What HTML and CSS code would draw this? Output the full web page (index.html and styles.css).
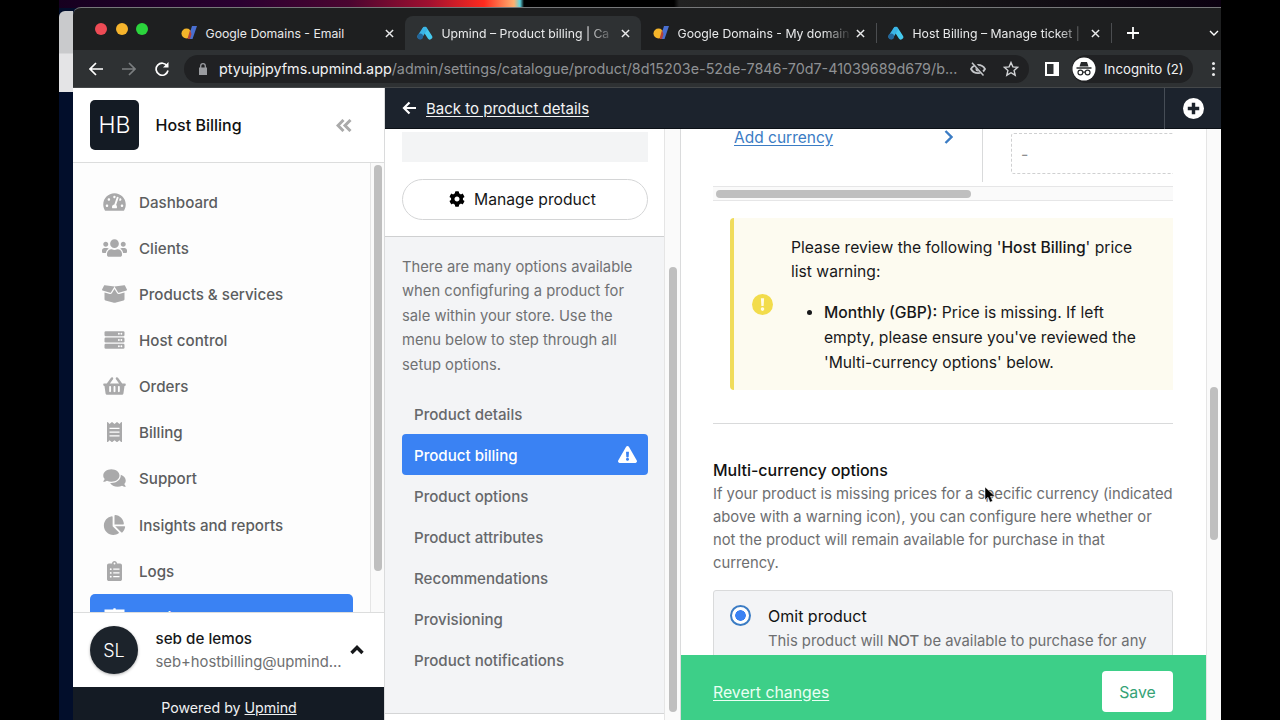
FILE: index.html
```html
<!DOCTYPE html>
<html lang="en">
<head>
  <meta charset="UTF-8" />
  <meta name="viewport" content="width=device-width, initial-scale=1.0"/>
  <title>Upmind – Product billing</title>
  <link rel="stylesheet" href="styles.css">
</head>
<body>
  <div class="desktop">
    <div class="back-window"></div>

    <div class="browser">
      <div class="tabs">
        <div class="lights"><i class="red"></i><i class="yellow"></i><i class="green"></i></div>
        <div class="tab">
          <svg class="fav" viewBox="0 0 16 16"><circle cx="5.5" cy="8.5" r="5" fill="#f5b52a"/><path d="M11 1h5l-4.500 13H7z" fill="#4a6fd0"/><path d="M9 5l1.500 4-1.500 5H6.500z" fill="#b5443c"/></svg>
          <span class="tab-title">Google Domains - Email</span>
          <svg class="close" viewBox="0 0 10 10"><path d="M1 1l8 8M9 1l-8 8"/></svg>
        </div>
        <div class="tab active">
          <svg class="fav" viewBox="0 0 16 16"><path d="M8 4.500l4.800 7.500" fill="none" stroke="#45c9ee" stroke-width="5" stroke-linecap="round"/><path d="M7.500 4.500L3 11.500" fill="none" stroke="#3ab4e6" stroke-width="5" stroke-linecap="round"/><circle cx="3.200" cy="11.500" r="2.900" fill="#23669a"/></svg>
          <span class="tab-title fade">Upmind – Product billing | Ca</span>
          <svg class="close" viewBox="0 0 10 10"><path d="M1 1l8 8M9 1l-8 8"/></svg>
        </div>
        <div class="tab third">
          <svg class="fav" viewBox="0 0 16 16"><circle cx="5.500" cy="8.500" r="5" fill="#f5b52a"/><path d="M11 1h5l-4.500 13H7z" fill="#4a6fd0"/><path d="M9 5l1.500 4-1.500 5H6.500z" fill="#b5443c"/></svg>
          <span class="tab-title fade">Google Domains - My domain</span>
          <svg class="close" viewBox="0 0 10 10"><path d="M1 1l8 8M9 1l-8 8"/></svg>
        </div>
        <div class="tab ruled">
          <svg class="fav" viewBox="0 0 16 16"><path d="M8 4.500l4.800 7.500" fill="none" stroke="#45c9ee" stroke-width="5" stroke-linecap="round"/><path d="M7.500 4.500L3 11.500" fill="none" stroke="#3ab4e6" stroke-width="5" stroke-linecap="round"/><circle cx="3.200" cy="11.500" r="2.900" fill="#23669a"/></svg>
          <span class="tab-title fade">Host Billing – Manage ticket |</span>
          <svg class="close" viewBox="0 0 10 10"><path d="M1 1l8 8M9 1l-8 8"/></svg>
        </div>
        <div class="tab-tools">
          <svg class="plus" viewBox="0 0 12 12"><path d="M6 0v12M0 6h12"/></svg>
          <svg class="more-tabs" viewBox="0 0 10 6"><path d="M1 1l4 4 4-4"/></svg>
        </div>
      </div>

      <div class="toolbar">
        <svg class="nav-btn" viewBox="0 0 14 14"><path d="M14 7H1M7 1L1 7l6 6"/></svg>
        <svg class="nav-btn dim" viewBox="0 0 14 14"><path d="M0 7h13M7 1l6 6-6 6"/></svg>
        <svg class="nav-btn" viewBox="0 0 14 14"><path d="M12.200 4A6 6 0 1 0 13 8.500"/><path d="M13.500 0v5.500H8z" fill="#fff" stroke="none"/></svg>
        <div class="omnibox">
          <svg class="lock" viewBox="0 0 10 12"><path d="M1 4.500h8V12H1z" fill="#9a9ca0"/><path d="M2.700 5V3a2.300 2.300 0 0 1 4.600 0v2" fill="none" stroke="#9a9ca0" stroke-width="1.300"/></svg>
          <span class="url"><b>ptyujpjpyfms.upmind.app</b>/admin/settings/catalogue/product/8d15203e-52de-7846-70d7-41039689d679/b...</span>
          <svg class="eye" viewBox="0 0 16 14"><path d="M1 7c3-5.500 11-5.500 14 0-3 5.500-11 5.500-14 0z" fill="none" stroke="#c4c6c9" stroke-width="1.800"/><circle cx="8" cy="7" r="2.500" fill="#c4c6c9"/><path d="M3 0l11 13" stroke="#202123" stroke-width="3.200"/><path d="M2 .8l11.500 12.700" stroke="#c4c6c9" stroke-width="1.500"/></svg>
          <svg class="star" viewBox="0 0 16 16"><path d="M8 1.500l1.900 4.400 4.800.4-3.600 3.200 1.100 4.700L8 11.700l-4.200 2.500 1.100-4.700L1.300 6.300l4.800-.4z" fill="none" stroke="#d0d2d4" stroke-width="1.400"/></svg>
        </div>
        <svg class="panel-ic" viewBox="0 0 14 14"><path d="M1 1h12v12H1z" fill="none" stroke="#fff" stroke-width="2"/><path d="M8.500 1H13v12H8.500z" fill="#fff"/></svg>
        <div class="incognito">
          <svg viewBox="0 0 24 24"><circle cx="12" cy="12" r="11.500" fill="#fff"/><path d="M7.500 9.500L9 5h6l1.500 4.500z" fill="#26282a"/><path d="M4.500 11h15" stroke="#26282a" stroke-width="1.400"/><g fill="none" stroke="#26282a" stroke-width="1.200"><circle cx="8.400" cy="15.500" r="2.400"/><circle cx="15.600" cy="15.500" r="2.400"/><path d="M10.800 15.200h2.400"/></g></svg>
          <span>Incognito (2)</span>
        </div>
        <div class="dots"><i></i><i></i><i></i></div>
      </div>

      <div class="app">
        <aside class="sidebar">
          <div class="brand">
            <div class="logo">HB</div>
            <span class="brand-name">Host Billing</span>
            <svg class="collapse" viewBox="0 0 16 13"><path d="M7.500 1L2 6.500 7.500 12M14.500 1L9 6.500l5.500 5.500"/></svg>
          </div>
          <div class="nav-area">
            <nav class="nav">
              <a class="nav-item"><svg viewBox="0 0 576 512"><path d="M288 32C128.940 32 0 160.940 0 320c0 52.800 14.250 102.260 39.060 144.800 5.610 9.620 16.300 15.200 27.440 15.200h443c11.140 0 21.830-5.580 27.440-15.200C561.750 422.260 576 372.800 576 320c0-159.060-128.940-288-288-288zm0 64c14.710 0 26.580 10.130 30.320 23.650-1.110 2.260-2.640 4.230-3.450 6.670l-9.220 27.670c-5.130 3.490-10.970 6.010-17.640 6.010-17.670 0-32-14.330-32-32S270.330 96 288 96zM96 384c-17.670 0-32-14.330-32-32s14.330-32 32-32 32 14.330 32 32-14.330 32-32 32zm48-160c-17.670 0-32-14.330-32-32s14.330-32 32-32 32 14.330 32 32-14.330 32-32 32zm246.770-72.410l-61.330 184C343.130 347.330 352 364.540 352 384c0 11.720-3.380 22.550-8.880 32H232.880c-5.500-9.450-8.880-20.280-8.880-32 0-33.940 26.500-61.430 59.900-63.590l61.340-184.010c4.170-12.560 17.730-19.450 30.360-15.170 12.570 4.190 19.350 17.790 15.170 30.360zm14.660 57.200l15.520-46.550c3.470-1.290 7.130-2.230 11.050-2.230 17.670 0 32 14.330 32 32s-14.330 32-32 32c-11.380-.010-20.890-6.280-26.570-15.220zM480 384c-17.670 0-32-14.330-32-32s14.330-32 32-32 32 14.330 32 32-14.330 32-32 32z"/></svg>Dashboard</a>
              <a class="nav-item"><svg viewBox="0 0 640 512"><path d="M96 224c35.300 0 64-28.700 64-64s-28.700-64-64-64-64 28.700-64 64 28.700 64 64 64zm448 0c35.300 0 64-28.700 64-64s-28.700-64-64-64-64 28.700-64 64 28.700 64 64 64zm32 32h-64c-17.600 0-33.500 7.100-45.100 18.600 40.300 22.100 68.900 62 75.100 109.400h66c17.700 0 32-14.300 32-32v-32c0-35.300-28.700-64-64-64zm-256 0c61.900 0 112-50.100 112-112S381.900 32 320 32 208 82.100 208 144s50.100 112 112 112zm76.800 32h-8.300c-20.800 10-43.900 16-68.500 16s-47.600-6-68.500-16h-8.300C179.600 288 128 339.600 128 403.200V432c0 26.500 21.500 48 48 48h288c26.500 0 48-21.500 48-48v-28.800c0-63.600-51.600-115.200-115.200-115.200zm-223.700-13.400C161.500 263.100 145.600 256 128 256H64c-35.300 0-64 28.700-64 64v32c0 17.700 14.300 32 32 32h65.900c6.300-47.400 34.900-87.300 75.200-109.400z"/></svg>Clients</a>
              <a class="nav-item"><svg viewBox="0 0 640 512"><path d="M425.700 256c-16.900 0-32.800-9-41.400-23.400L320 126l-64.200 106.600c-8.700 14.500-24.600 23.500-41.500 23.500-4.500 0-9-.6-13.300-1.900L64 215v178c0 14.700 10 27.500 24.200 31l216.200 54.100c10.200 2.500 20.900 2.500 31 0L551.800 424c14.200-3.600 24.200-16.400 24.200-31V215l-137 39.100c-4.300 1.300-8.800 1.900-13.300 1.900zm212.600-112.200L586.800 41c-3.100-6.200-9.800-9.800-16.700-8.900L320 64l91.700 152.100c3.800 6.300 11.400 9.300 18.500 7.300l197.900-56.500c9.900-2.900 14.700-13.900 10.200-23.100zM53.200 41L1.700 143.800c-4.600 9.200.3 20.200 10.100 23l197.900 56.500c7.100 2 14.700-1 18.500-7.300L320 64 69.800 32.100c-6.900-.8-13.500 2.700-16.600 8.900z"/></svg>Products &amp; services</a>
              <a class="nav-item"><svg viewBox="0 0 512 512"><rect x="0" y="32" width="512" height="128" rx="30"/><rect x="0" y="192" width="512" height="128" rx="30"/><rect x="0" y="352" width="512" height="128" rx="30"/><g fill="#fff"><circle cx="368" cy="96" r="24"/><circle cx="432" cy="96" r="24"/><circle cx="368" cy="256" r="24"/><circle cx="432" cy="256" r="24"/><circle cx="368" cy="416" r="24"/><circle cx="432" cy="416" r="24"/></g></svg>Host control</a>
              <a class="nav-item"><svg viewBox="0 0 576 512"><path d="M576 216v16c0 13.255-10.745 24-24 24h-8l-26.113 182.788C514.509 462.435 494.257 480 470.370 480H105.630c-23.887 0-44.139-17.565-47.518-41.212L32 256h-8c-13.255 0-24-10.745-24-24v-16c0-13.255 10.745-24 24-24h67.341l106.780-146.821c10.395-14.292 30.407-17.453 44.701-7.058 14.293 10.395 17.453 30.408 7.058 44.701L170.477 192h235.046L326.120 82.821c-10.395-14.292-7.234-34.306 7.059-44.701 14.291-10.395 34.306-7.235 44.701 7.058L484.659 192H552c13.255 0 24 10.745 24 24zM312 392V280c0-13.255-10.745-24-24-24s-24 10.745-24 24v112c0 13.255 10.745 24 24 24s24-10.745 24-24zm112 0V280c0-13.255-10.745-24-24-24s-24 10.745-24 24v112c0 13.255 10.745 24 24 24s24-10.745 24-24zm-224 0V280c0-13.255-10.745-24-24-24s-24 10.745-24 24v112c0 13.255 10.745 24 24 24s24-10.745 24-24z"/></svg>Orders</a>
              <a class="nav-item"><svg viewBox="0 0 384 512"><path d="M358.400 3.200L320 48 265.600 3.200a15.900 15.900 0 0 0-19.200 0L192 48 137.600 3.200a15.900 15.900 0 0 0-19.200 0L64 48 25.600 3.200C15-4.700 0 2.800 0 16v480c0 13.200 15 20.700 25.600 12.800L64 464l54.400 44.800a15.900 15.900 0 0 0 19.200 0L192 464l54.400 44.800a15.900 15.900 0 0 0 19.200 0L320 464l38.400 44.800c10.500 7.900 25.600.4 25.600-12.800V16c0-13.200-15-20.700-25.600-12.800z"/><path d="M64 144h256v32H64zM64 240h256v32H64zM64 336h256v32H64z" fill="#fff"/></svg>Billing</a>
              <a class="nav-item"><svg viewBox="0 0 576 512"><path d="M416 192c0-88.400-93.100-160-208-160S0 103.600 0 192c0 34.300 14.100 65.900 38 92-13.400 30.200-35.500 54.200-35.800 54.500-2.200 2.300-2.800 5.700-1.500 8.700S4.800 352 8 352c36.600 0 66.900-12.300 88.700-25 32.200 15.700 70.300 25 111.300 25 114.900 0 208-71.600 208-160zm122 220c23.900-26 38-57.700 38-92 0-66.900-53.500-124.200-129.300-148.100.9 6.600 1.300 13.300 1.300 20.100 0 105.900-107.700 192-240 192-10.800 0-21.300-.8-31.700-1.900C207.800 439.600 281.800 480 368 480c41 0 79.100-9.200 111.300-25 21.800 12.700 52.100 25 88.700 25 3.200 0 6.100-1.900 7.300-4.800 1.300-2.900.7-6.300-1.500-8.700-.3-.3-22.400-24.200-35.800-54.500z"/></svg>Support</a>
              <a class="nav-item"><svg viewBox="0 0 544 512"><path d="M527.790 288H290.500l158.030 158.030c6.040 6.040 15.980 6.530 22.190.68 38.700-36.460 65.320-85.610 73.130-140.860 1.340-9.460-6.510-17.850-16.060-17.850zm-15.830-64.800C503.720 103.740 408.260 8.280 288.800.04 279.680-.59 272 7.100 272 16.240V240h223.770c9.140 0 16.820-7.680 16.190-16.800zM224 288V50.710c0-9.550-8.390-17.400-17.840-16.060C86.990 51.490-4.100 155.600.14 280.370 4.500 408.510 114.830 512.590 243.030 510.980c50.400-.63 96.970-16.870 135.260-44.030 7.900-5.600 8.420-17.230 1.570-24.080L224 288z"/></svg>Insights and reports</a>
              <a class="nav-item"><svg viewBox="0 0 384 512"><path d="M336 64h-80c0-35.300-28.700-64-64-64s-64 28.700-64 64H48C21.500 64 0 85.500 0 112v352c0 26.500 21.500 48 48 48h288c26.500 0 48-21.500 48-48V112c0-26.500-21.500-48-48-48z"/><g fill="#fff"><circle cx="192" cy="64" r="24"/><circle cx="96" cy="208" r="24"/><circle cx="96" cy="304" r="24"/><circle cx="96" cy="400" r="24"/><path d="M160 192h160v32H160zM160 288h160v32H160zM160 384h160v32H160z"/></g></svg>Logs</a>
              <a class="nav-item current"><svg viewBox="0 0 512 512"><path d="M0 64h512v64H0zM0 224h512v64H0zM0 384h512v64H0z"/><rect x="224" y="32" width="64" height="128" rx="16"/><rect x="352" y="192" width="64" height="128" rx="16"/><rect x="128" y="352" width="64" height="128" rx="16"/></svg>Settings</a>
            </nav>
            <div class="scroll"><div class="thumb nav-thumb"></div></div>
          </div>
          <div class="user">
            <div class="avatar">SL</div>
            <div class="user-text">
              <div class="user-name">seb de lemos</div>
              <div class="user-mail">seb+hostbilling@upmind...</div>
            </div>
            <svg class="caret" viewBox="0 0 14 10"><path d="M1.500 8L7 2.500 12.500 8"/></svg>
          </div>
          <div class="powered"><span>Powered by <u>Upmind</u></span></div>
        </aside>

        <div class="main">
          <header class="topbar">
            <svg class="back" viewBox="0 0 14 14"><path d="M14 7H2M7.500 1.500L2 7l5.500 5.500"/></svg>
            <a class="back-link">Back to product details</a>
            <div class="add"><svg viewBox="0 0 22 22"><circle cx="11" cy="11" r="11" fill="#fff"/><path d="M11 5v12M5 11h12" stroke="#1c232c" stroke-width="3.600"/></svg></div>
          </header>

          <div class="columns">
            <div class="product">
              <div class="product-inner">
                <div class="product-top">
                  <div class="thumbnail"></div>
                  <button class="manage"><svg viewBox="0 0 512 512"><path d="M487.400 315.700l-42.600-24.600c4.300-23.200 4.300-47 0-70.200l42.600-24.600c4.900-2.800 7.100-8.600 5.500-14-11.100-35.600-30-67.800-54.700-94.600-3.800-4.100-10-5.100-14.800-2.300L380.800 110c-17.900-15.400-38.500-27.300-60.800-35.100V25.800c0-5.600-3.900-10.500-9.400-11.700-36.700-8.200-74.300-7.800-109.200 0-5.500 1.200-9.400 6.100-9.400 11.700V75c-22.200 7.900-42.800 19.800-60.800 35.100L88.700 85.500c-4.900-2.800-11-1.900-14.800 2.300-24.700 26.700-43.600 58.900-54.700 94.600-1.700 5.400.6 11.200 5.500 14L67.300 221c-4.300 23.200-4.300 47 0 70.200l-42.600 24.600c-4.900 2.800-7.100 8.600-5.500 14 11.100 35.600 30 67.800 54.700 94.600 3.800 4.100 10 5.100 14.800 2.300l42.600-24.600c17.900 15.400 38.500 27.300 60.800 35.100v49.200c0 5.600 3.900 10.500 9.400 11.700 36.700 8.200 74.300 7.800 109.200 0 5.500-1.200 9.400-6.100 9.400-11.700v-49.200c22.200-7.900 42.800-19.800 60.800-35.100l42.600 24.600c4.900 2.800 11 1.900 14.800-2.300 24.700-26.700 43.600-58.900 54.700-94.600 1.500-5.500-.7-11.300-5.600-14.100zM256 336c-44.100 0-80-35.900-80-80s35.900-80 80-80 80 35.900 80 80-35.900 80-80 80z"/></svg>Manage product</button>
                </div>
                <div class="product-menu">
                  <p class="intro">There are many options available<br>when configfuring a product for<br>sale within your store. Use the<br>menu below to step through all<br>setup options.</p>
                  <a class="step">Product details</a>
                  <a class="step on">Product billing<svg viewBox="0 0 576 512"><path d="M569.517 440.013C587.975 472.007 564.806 512 527.940 512H48.054c-36.937 0-59.999-40.055-41.577-71.987L246.423 23.985c18.467-32.009 64.720-31.951 83.154 0l239.940 416.028zM288 354c-25.405 0-46 20.595-46 46s20.595 46 46 46 46-20.595 46-46-20.595-46-46-46zm-43.673-165.346l7.418 136c.347 6.364 5.609 11.346 11.982 11.346h48.546c6.373 0 11.635-4.982 11.982-11.346l7.418-136c.375-6.874-5.098-12.654-11.982-12.654h-63.383c-6.884 0-12.356 5.780-11.981 12.654z"/></svg></a>
                  <a class="step">Product options</a>
                  <a class="step">Product attributes</a>
                  <a class="step">Recommendations</a>
                  <a class="step">Provisioning</a>
                  <a class="step">Product notifications</a>
                </div>
              </div>
              <div class="scroll product-scroll"><div class="thumb product-thumb"></div></div>
            </div>

            <div class="content">
              <div class="content-body">
                <div class="prices">
                  <div class="currency"><a>Add currency</a><svg viewBox="0 0 9 14"><path d="M1.500 1L7.500 7l-6 6"/></svg></div>
                  <div class="price-cell"><div class="price-input">-</div></div>
                </div>
                <div class="hscroll"><div class="hthumb"></div></div>

                <div class="alert">
                  <svg class="alert-ic" viewBox="0 0 22 22"><circle cx="11" cy="11" r="11" fill="#f2dc4c"/><path d="M9.300 4.500h3.400l-.5 8h-2.400z" fill="#fffbe6"/><circle cx="11" cy="15.800" r="1.900" fill="#fffbe6"/></svg>
                  <div class="alert-text">
                    <p>Please review the following '<b>Host Billing</b>' price<br>list warning:</p>
                    <ul><li><b>Monthly (GBP):</b> Price is missing. If left<br>empty, please ensure you've reviewed the<br>'Multi-currency options' below.</li></ul>
                  </div>
                </div>

                <div class="multi">
                  <h4>Multi-currency options</h4>
                  <p>If your product is missing prices for a specific currency (indicated<br>above with a warning icon), you can configure here whether or<br>not the product will remain available for purchase in that<br>currency.</p>
                  <div class="option">
                    <span class="radio"></span>
                    <div>
                      <div class="option-title">Omit product</div>
                      <div class="option-text">This product will <b>NOT</b> be available to purchase for any</div>
                    </div>
                  </div>
                </div>
              </div>
              <div class="savebar">
                <a>Revert changes</a>
                <button>Save</button>
              </div>
            </div>
            <div class="scroll page-scroll"><div class="thumb page-thumb"></div></div>
          </div>
        </div>
      </div>
    </div>

    <svg class="cursor" viewBox="0 0 12 18"><path d="M1 1v13l3-2.800 2 5 2.600-1.100-2.100-4.800H11z" fill="#000" stroke="#fff" stroke-width=".5"/></svg>
  </div>
</body>
</html>
```
FILE: styles.css
```css
* {
  box-sizing: border-box;
}

body {
  margin: 0;
  width: 1280px;
  height: 720px;
  overflow: hidden;
  background: #000;
  font-family: Inter, "Liberation Sans", sans-serif;
  font-size: 16px;
  white-space: nowrap;
}

svg {
  display: block;
  flex: none;
}

p, h4, ul {
  margin: 0;
}

b {
  font-weight: 500;
}

.desktop {
  position: relative;
  width: 1162px;
  height: 720px;
  margin-left: 59px;
  display: flex;
  padding-top: 7px;
  background: linear-gradient(90deg, #16001f 0, #2a0030 180px, #4a0530 290px, #a01030 370px, #ff2a1e 425px, #ffb070 455px, #5fd5e0 461px, #000 465px, #000 615px, #222 620px, #181818 860px, #0b0010 100%) top / 100% 8px no-repeat, #020e2b;
}

.back-window {
  width: 14px;
  height: 81px;
  margin-top: 4px;
  border-radius: 6px 0 0 0;
  background: linear-gradient(#c9cacc 0, #c9cacc 42px, #e4e4e6 43px);
}

/* browser chrome */
.browser {
  width: 1148px;
  height: 713px;
  display: flex;
  flex-direction: column;
  border-top: 1px solid #77787a;
  border-radius: 8px 0 0 0;
  overflow: hidden;
  background: #1e1f20;
}

.tabs {
  height: 42px;
  display: flex;
  align-items: flex-end;
  color: #e9eaeb;
  font-size: 12.250px;
}

.lights {
  width: 95px;
  height: 42px;
  display: flex;
  gap: 8.500px;
  padding: 15px 0 0 22px;
}

.lights i {
  width: 12px;
  height: 12px;
  border-radius: 50%;
}

.red { background: #ee4b55; }
.yellow { background: #f6b42c; }
.green { background: #2bd43c; }

.tab {
  width: 237px;
  height: 34px;
  display: flex;
  align-items: center;
  padding: 0 11px 0 13px;
}

.tab.active {
  width: 236px;
  padding: 0 11px 0 12px;
  background: #2e3133;
  border-radius: 8px 8px 0 0;
}

.tab.third {
  width: 235px;
  padding: 0 11px 0 12px;
}

.tab.ruled {
  width: 236px;
  padding: 0 11px 0 11px;
  border-left: 1px solid #4b4d50;
  border-right: 1px solid #4b4d50;
  height: 20px;
  margin-bottom: 7px;
}

.fav {
  width: 16px;
  height: 16px;
  margin-right: 8.500px;
}

.tab-title {
  flex: 1;
}

.fade {
  -webkit-mask-image: linear-gradient(90deg, #000 145px, transparent 174px);
  mask-image: linear-gradient(90deg, #000 145px, transparent 174px);
}

.close {
  width: 9px;
  height: 9px;
  stroke: #e9eaeb;
  stroke-width: 1.600;
}

.tab-tools {
  flex: 1;
  height: 34px;
  display: flex;
  align-items: center;
  justify-content: space-between;
  padding-left: 15px;
  fill: none;
  stroke: #fff;
}

.plus {
  width: 12px;
  height: 12px;
  stroke-width: 1.800;
}

.more-tabs {
  width: 10px;
  height: 6px;
  margin-right: 2px;
  stroke-width: 1.400;
}

.toolbar {
  height: 38px;
  display: flex;
  align-items: center;
  padding-left: 16px;
  background: #2e3133;
  border-bottom: 1px solid #45484a;
}

.nav-btn {
  width: 14px;
  height: 14px;
  margin-right: 19px;
  fill: none;
  stroke: #fff;
  stroke-width: 1.700;
}

.nav-btn.dim {
  stroke: #7b7e80;
}

.omnibox {
  width: 845px;
  height: 28px;
  display: flex;
  align-items: center;
  padding: 0 10px 0 14px;
  margin-left: -4px;
  border-radius: 14px;
  background: #202123;
}

.lock {
  width: 10px;
  height: 12px;
  margin-right: 11px;
}

.url {
  flex: 1;
  color: #8f9194;
  font-size: 14.350px;
}

.url b {
  color: #f1f2f3;
  font-weight: 400;
}

.eye {
  width: 16px;
  height: 14px;
  margin-right: 17px;
}

.star {
  width: 16px;
  height: 16px;
}

.panel-ic {
  width: 14px;
  height: 14px;
  margin-left: 16px;
}

.incognito {
  width: 121px;
  height: 28px;
  margin-left: 13px;
  display: flex;
  align-items: center;
  gap: 8px;
  border-radius: 14px;
  background: #202123;
  color: #f1f2f3;
  font-size: 13.250px;
}

.incognito svg {
  width: 24px;
  height: 24px;
}

.dots {
  display: grid;
  gap: 2.500px;
  margin-left: 19px;
}

.dots i {
  width: 3px;
  height: 3px;
  border-radius: 50%;
  background: #e9eaeb;
}

/* app */
.app {
  flex: 1;
  min-height: 0;
  display: flex;
  background: #fff;
}

.sidebar {
  width: 312px;
  flex: none;
  display: flex;
  flex-direction: column;
  border-right: 1px solid #dadbdc;
  background: #fff;
}

.brand {
  height: 75px;
  display: flex;
  align-items: center;
  padding: 0 32px 0 17px;
  border-bottom: 1px solid #dcdddd;
}

.logo {
  width: 49px;
  height: 50px;
  display: grid;
  place-items: center;
  border-radius: 5px;
  background: #141b24;
  color: #fff;
  font-size: 23px;
  font-weight: 300;
}

.brand-name {
  flex: 1;
  margin-left: 16.500px;
  color: #111;
  font-weight: 500;
}

.collapse {
  width: 16px;
  height: 13px;
  fill: none;
  stroke: #aaa;
  stroke-width: 3;
}

.nav-area {
  height: 449px;
  display: flex;
  overflow: hidden;
}

.nav {
  flex: 1;
  padding: 15.500px 17px 0 17px;
  background: #fdfdfd;
}

.nav-item {
  height: 46.150px;
  display: flex;
  align-items: center;
  padding-top: 1px;
  color: #5c5d5f;
  font-size: 15.150px;
  font-weight: 500;
}

.nav-item svg {
  width: 49px;
  height: 20px;
  margin-top: -1px;
  fill: #a9a9aa;
}

.nav-item.current {
  background: #3a82f3;
  border-radius: 5px;
  color: #fff;
}

.nav-item.current svg {
  fill: #fff;
}

.scroll {
  width: 14px;
  flex: none;
  border-left: 1px solid #e5e5e5;
  background: #fafafa;
}

.thumb {
  width: 8px;
  margin: 0 auto;
  border-radius: 4px;
  background: #bfbfbf;
}

.nav-thumb {
  height: 406px;
  margin-top: 2px;
}

.user {
  height: 75px;
  display: flex;
  align-items: center;
  padding: 0 20px 0 17px;
  border-top: 1px solid #dcdddd;
}

.avatar {
  width: 48px;
  height: 48px;
  flex: none;
  display: grid;
  place-items: center;
  border-radius: 50%;
  background: #1c232b;
  box-shadow: 0 1px 3px rgba(0, 0, 0, 0.3);
  color: #fff;
  font-size: 18px;
  font-weight: 300;
}

.user-text {
  flex: 1;
  margin-left: 17.500px;
  padding-top: 1px;
  line-height: 23px;
}

.user-name {
  color: #16181a;
  font-size: 15.200px;
  font-weight: 500;
}

.user-mail {
  padding-top: 0.5px;
  color: #6e6f71;
  font-size: 14.800px;
}

.caret {
  width: 14px;
  height: 10px;
  fill: none;
  stroke: #16181a;
  stroke-width: 3.400;
}

.powered {
  flex: 1;
  display: flex;
  justify-content: center;
  padding: 11px 0 0 1px;
  background: #141b24;
  color: #f0f1f2;
  font-size: 14.200px;
  line-height: 20px;
}

.main {
  flex: 1;
  min-width: 0;
  display: flex;
  flex-direction: column;
}

.topbar {
  height: 41px;
  display: flex;
  align-items: center;
  padding-left: 17px;
  background: #1c232d;
  border-bottom: 1px solid #0c1117;
}

.back {
  width: 14px;
  height: 14px;
  fill: none;
  stroke: #fff;
  stroke-width: 2.200;
}

.back-link {
  flex: 1;
  margin-left: 10px;
  padding-top: 1px;
  color: #f3f4f5;
  font-size: 15px;
  text-decoration: underline;
  text-underline-offset: 2px;
}

.add {
  width: 57px;
  height: 41px;
  display: grid;
  place-items: center;
  border-left: 1px solid #464d56;
}

.add svg {
  width: 21px;
  height: 21px;
}

.columns {
  flex: 1;
  min-height: 0;
  display: flex;
}

.product {
  width: 296px;
  flex: none;
  display: flex;
  border-right: 1px solid #dadbdc;
}

.product-inner {
  flex: 1;
  min-width: 0;
}

.product-top {
  height: 108px;
  padding: 3px 16px 0 17px;
  border-bottom: 1px solid #cfd0d1;
}

.thumbnail {
  height: 30px;
  background: #f3f4f5;
}

.manage {
  width: 100%;
  height: 41px;
  margin-top: 16.500px;
  display: flex;
  align-items: center;
  justify-content: center;
  gap: 9px;
  padding: 0 10px 0 5px;
  border: 1px solid #d4d5d6;
  border-radius: 21px;
  background: #fff;
  color: #151617;
  font: inherit;
  font-size: 15.700px;
}

.manage svg {
  width: 16px;
  height: 16px;
}

.product-menu {
  height: 477px;
  padding: 17.500px 16px 0 17px;
  background: #f3f4f6;
  border-bottom: 1px solid #d4d5d6;
}

.intro {
  margin-bottom: 16px;
  color: #707173;
  font-size: 14.760px;
  line-height: 24.600px;
}

.step {
  height: 41px;
  display: flex;
  align-items: center;
  justify-content: space-between;
  padding: 1px 11px 0 12px;
  border-radius: 4px;
  color: #66686b;
  font-size: 15.100px;
  font-weight: 500;
}

.step.on {
  background: #3a82f3;
  color: #fff;
}

.step svg {
  width: 19px;
  height: 17px;
  margin-top: -2px;
  fill: #fff;
}

.product-scroll {
  width: 16px;
}

.product-thumb {
  height: 445px;
  margin-top: 138px;
}

.content {
  flex: 1;
  min-width: 0;
  display: flex;
  flex-direction: column;
}

.content-body {
  flex: 1;
  min-height: 0;
  overflow: hidden;
  padding: 0 33px 0 32px;
}

.prices {
  height: 53px;
  display: flex;
  overflow: hidden;
}

.currency {
  width: 270px;
  height: 53px;
  flex: none;
  display: flex;
  justify-content: space-between;
  align-items: flex-start;
  padding: 0 29px 0 21px;
  border-right: 1px solid #d9dadb;
  color: #3b7cc4;
  font-size: 15.500px;
  line-height: 17px;
}

.currency a {
  text-decoration: underline;
  text-underline-offset: 2px;
}

.currency svg {
  width: 9px;
  height: 14px;
  margin-top: 1px;
  fill: none;
  stroke: #3b7cc4;
  stroke-width: 2.400;
}

.price-cell {
  flex: 1;
  min-width: 0;
  padding: 4px 0 0 28px;
}

.price-input {
  width: 200px;
  height: 41px;
  padding-left: 9px;
  border: 1px dashed #cfd0d1;
  border-radius: 3px;
  color: #8d8e90;
  line-height: 40px;
}

.hscroll {
  height: 15px;
  margin-top: 4px;
  padding: 3px;
  border: solid #e6e6e7;
  border-width: 1px 0;
  background: #fafafa;
}

.hthumb {
  width: 255px;
  height: 8px;
  border-radius: 4px;
  background: #bfbfbf;
}

.alert {
  height: 172px;
  margin: 17px 0 0 17px;
  display: flex;
  align-items: center;
  padding-left: 18px;
  border-left: 4px solid #f0dc5c;
  border-radius: 4px 0 0 4px;
  background: #fdfbf0;
  color: #17181a;
  font-size: 15.650px;
  line-height: 24.600px;
}

.alert-ic {
  width: 21px;
  height: 21px;
}

.alert-text {
  margin-left: 18px;
  padding-top: 3px;
}

.alert ul {
  margin-top: 16.500px;
  padding-left: 33px;
}

.multi {
  margin-top: 33px;
  padding-top: 34px;
  border-top: 1px solid #d9dadb;
}

.multi h4 {
  color: #111;
  font-size: 16px;
  font-weight: 500;
  line-height: 24px;
}

.multi p {
  padding-top: 1px;
  color: #6d6e70;
  font-size: 14.800px;
  line-height: 23px;
}

.option {
  height: 120px;
  margin-top: 15px;
  display: flex;
  padding: 14px 16px;
  border: 1px solid #d9dadb;
  border-radius: 3px;
  background: #f3f4f6;
}

.radio {
  width: 21px;
  height: 21px;
  margin-right: 17px;
  flex: none;
  border: 2px solid #3b7cc4;
  border-radius: 50%;
  background: radial-gradient(circle, #3a82f3 5px, #fff 5.600px);
}

.option-title {
  color: #111;
  line-height: 23px;
}

.option-text {
  padding-top: 1px;
  color: #6d6e70;
  font-size: 14.800px;
  line-height: 25px;
}

.savebar {
  height: 65px;
  display: flex;
  align-items: center;
  justify-content: space-between;
  padding: 8px 33px 0 32px;
  background: #3dcf88;
  color: #e9fff3;
  font-size: 15.800px;
}

.savebar a {
  padding-top: 1px;
  text-decoration: underline;
  text-underline-offset: 2px;
}

.savebar button {
  width: 71px;
  height: 41px;
  padding-top: 2px;
  border: 0;
  border-radius: 4px;
  background: #fff;
  color: #35a377;
  font: inherit;
}

.page-scroll {
  width: 15px;
}

.page-thumb {
  height: 153px;
  margin-top: 258px;
}

.cursor {
  position: absolute;
  left: 925px;
  top: 486px;
  width: 12px;
  height: 18px;
}
```
